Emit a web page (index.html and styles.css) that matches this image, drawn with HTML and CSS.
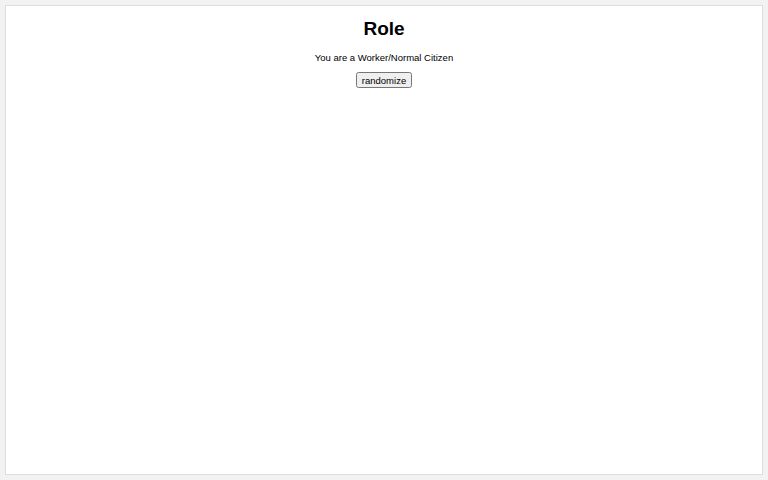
FILE: index.html
```html
<!DOCTYPE html>
<html>
<head>
<meta charset="utf-8">
<link rel="stylesheet" href="styles.css">
</head>
<body>
<div class="panel">
  <h1 class="title">Role</h1>
  <p class="role">You are a Worker/Normal Citizen</p>
  <button class="btn">randomize</button>
</div>
</body>
</html>
```
FILE: styles.css
```css
html, body { margin: 0; padding: 0; }
body {
  background: #f2f2f2;
  padding: 5px;
  font-family: "Liberation Sans", Arial, sans-serif;
  box-sizing: border-box;
  height: 480px;
}
.panel {
  background: #fff;
  border: 1px solid #dcdcdc;
  height: 470px;
  box-sizing: border-box;
  display: flex;
  flex-direction: column;
  align-items: center;
}
.title {
  font-size: 19px;
  font-weight: bold;
  margin: 11px 0 0 0;
  line-height: 23px;
  color: #000;
}
.role {
  font-size: 9.5px;
  margin: 12px 0 0 0;
  line-height: 11px;
  color: #000;
}
.btn {
  margin-top: 9px;
  font-family: "Liberation Sans", Arial, sans-serif;
  font-size: 9.5px;
  padding: 1px 4px 0;
  line-height: 11px;
}
```
